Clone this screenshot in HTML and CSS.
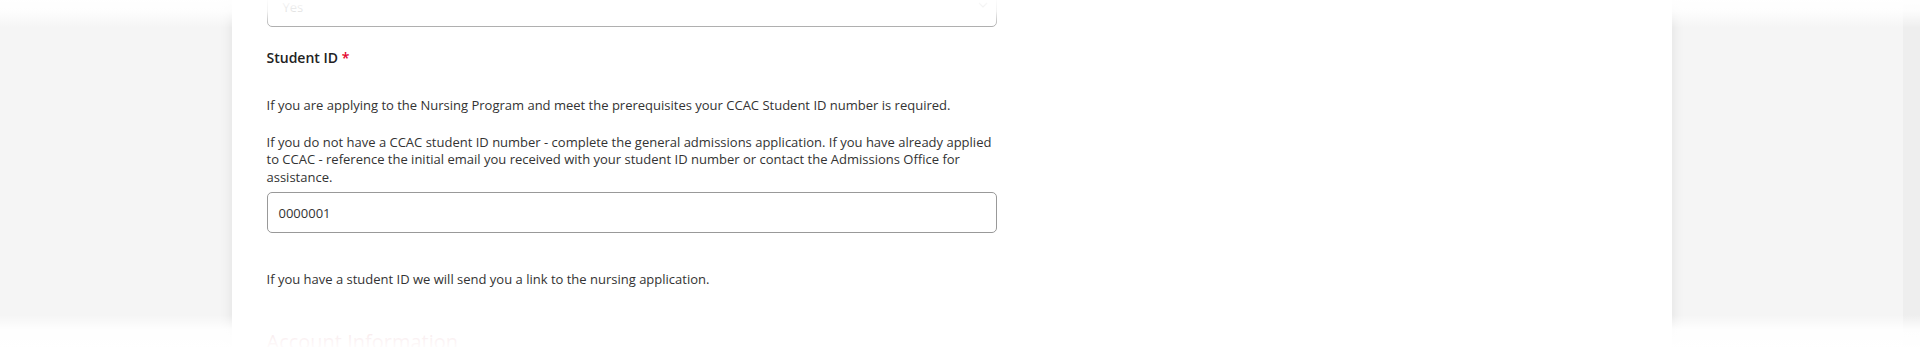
FILE: index.html
```html
<!DOCTYPE html>
<html lang="en">
<head>
<meta charset="utf-8">
<title>Student ID</title>
<link rel="stylesheet" href="styles.css">
</head>
<body>
<div class="page">
  <main class="card">
    <div class="select">
      <span class="select-value">Yes</span>
      <svg class="chevron" width="10" height="6" viewBox="0 0 10 6"><path d="M1 1l4 4 4-4" fill="none" stroke="#888" stroke-width="1.2"/></svg>
    </div>
    <label class="label">Student ID <span class="req">*</span></label>
    <p class="text first">If you are applying to the Nursing Program and meet the prerequisites your CCAC Student ID number is required.</p>
    <p class="text second">If you do not have a CCAC student ID number - complete the general admissions application. If you have already applied to CCAC - reference the initial email you received with your student ID number or contact the Admissions Office for assistance.</p>
    <div class="input">0000001</div>
    <p class="text third">If you have a student ID we will send you a link to the nursing application.</p>
    <h2 class="section-title">Account Information</h2>
  </main>
</div>
<div class="scrollbar"></div>
<div class="fade-top"></div>
<div class="fade-bottom"></div>
</body>
</html>
```
FILE: styles.css
```css
html, body {
  margin: 0;
  padding: 0;
}
body {
  height: 347px;
  overflow: hidden;
  display: flex;
  background: #f5f5f5;
  font-family: "Open Sans", "Liberation Sans", sans-serif;
  color: #333;
  position: relative;
}
.page {
  flex: 1;
  display: flex;
  justify-content: center;
}
.card {
  width: 1440px;
  background: #fff;
  box-shadow: 0 0 12px rgba(0, 0, 0, 0.09);
  padding-left: 35px;
  box-sizing: border-box;
}
.select {
  margin-top: -14px;
  width: 730px;
  height: 41px;
  box-sizing: border-box;
  border: 1px solid #a9a9a9;
  border-radius: 5px;
  display: flex;
  align-items: center;
  justify-content: space-between;
  padding: 0 8px 0 15px;
  font-size: 13px;
  color: #555;
}
.chevron {
  margin-top: -4px;
}
.label {
  display: block;
  margin-top: 21px;
  font-size: 14px;
  line-height: 20px;
  font-weight: 600;
  color: #222;
}
.req {
  color: #e4002b;
}
.text {
  margin: 0;
  width: 730px;
  font-size: 13px;
  line-height: 1.35;
  color: #333;
}
.first {
  margin-top: 29px;
}
.second {
  margin-top: 19px;
}
.input {
  margin-top: 6px;
  width: 730px;
  height: 41px;
  box-sizing: border-box;
  border: 1px solid #999;
  border-radius: 5px;
  padding: 0 11px;
  display: flex;
  align-items: center;
  font-size: 13px;
  color: #333;
}
.third {
  margin-top: 38px;
}
.section-title {
  margin: 41px 0 0;
  font-size: 20px;
  line-height: 24px;
  font-weight: 400;
  color: #b0102a;
}
.scrollbar {
  width: 17px;
  flex: none;
  background: #eeeeee;
}
.fade-top {
  position: absolute;
  left: 0;
  right: 0;
  top: 0;
  height: 28px;
  background: linear-gradient(to bottom, rgba(255,255,255,0.97) 0, rgba(255,255,255,0.85) 40%, rgba(255,255,255,0) 100%);
  pointer-events: none;
}
.fade-bottom {
  position: absolute;
  left: 0;
  right: 0;
  bottom: 0;
  height: 32px;
  background: linear-gradient(to bottom, rgba(255,255,255,0) 0, rgba(255,255,255,0.9) 45%, rgba(255,255,255,0.98) 100%);
  pointer-events: none;
}
```
